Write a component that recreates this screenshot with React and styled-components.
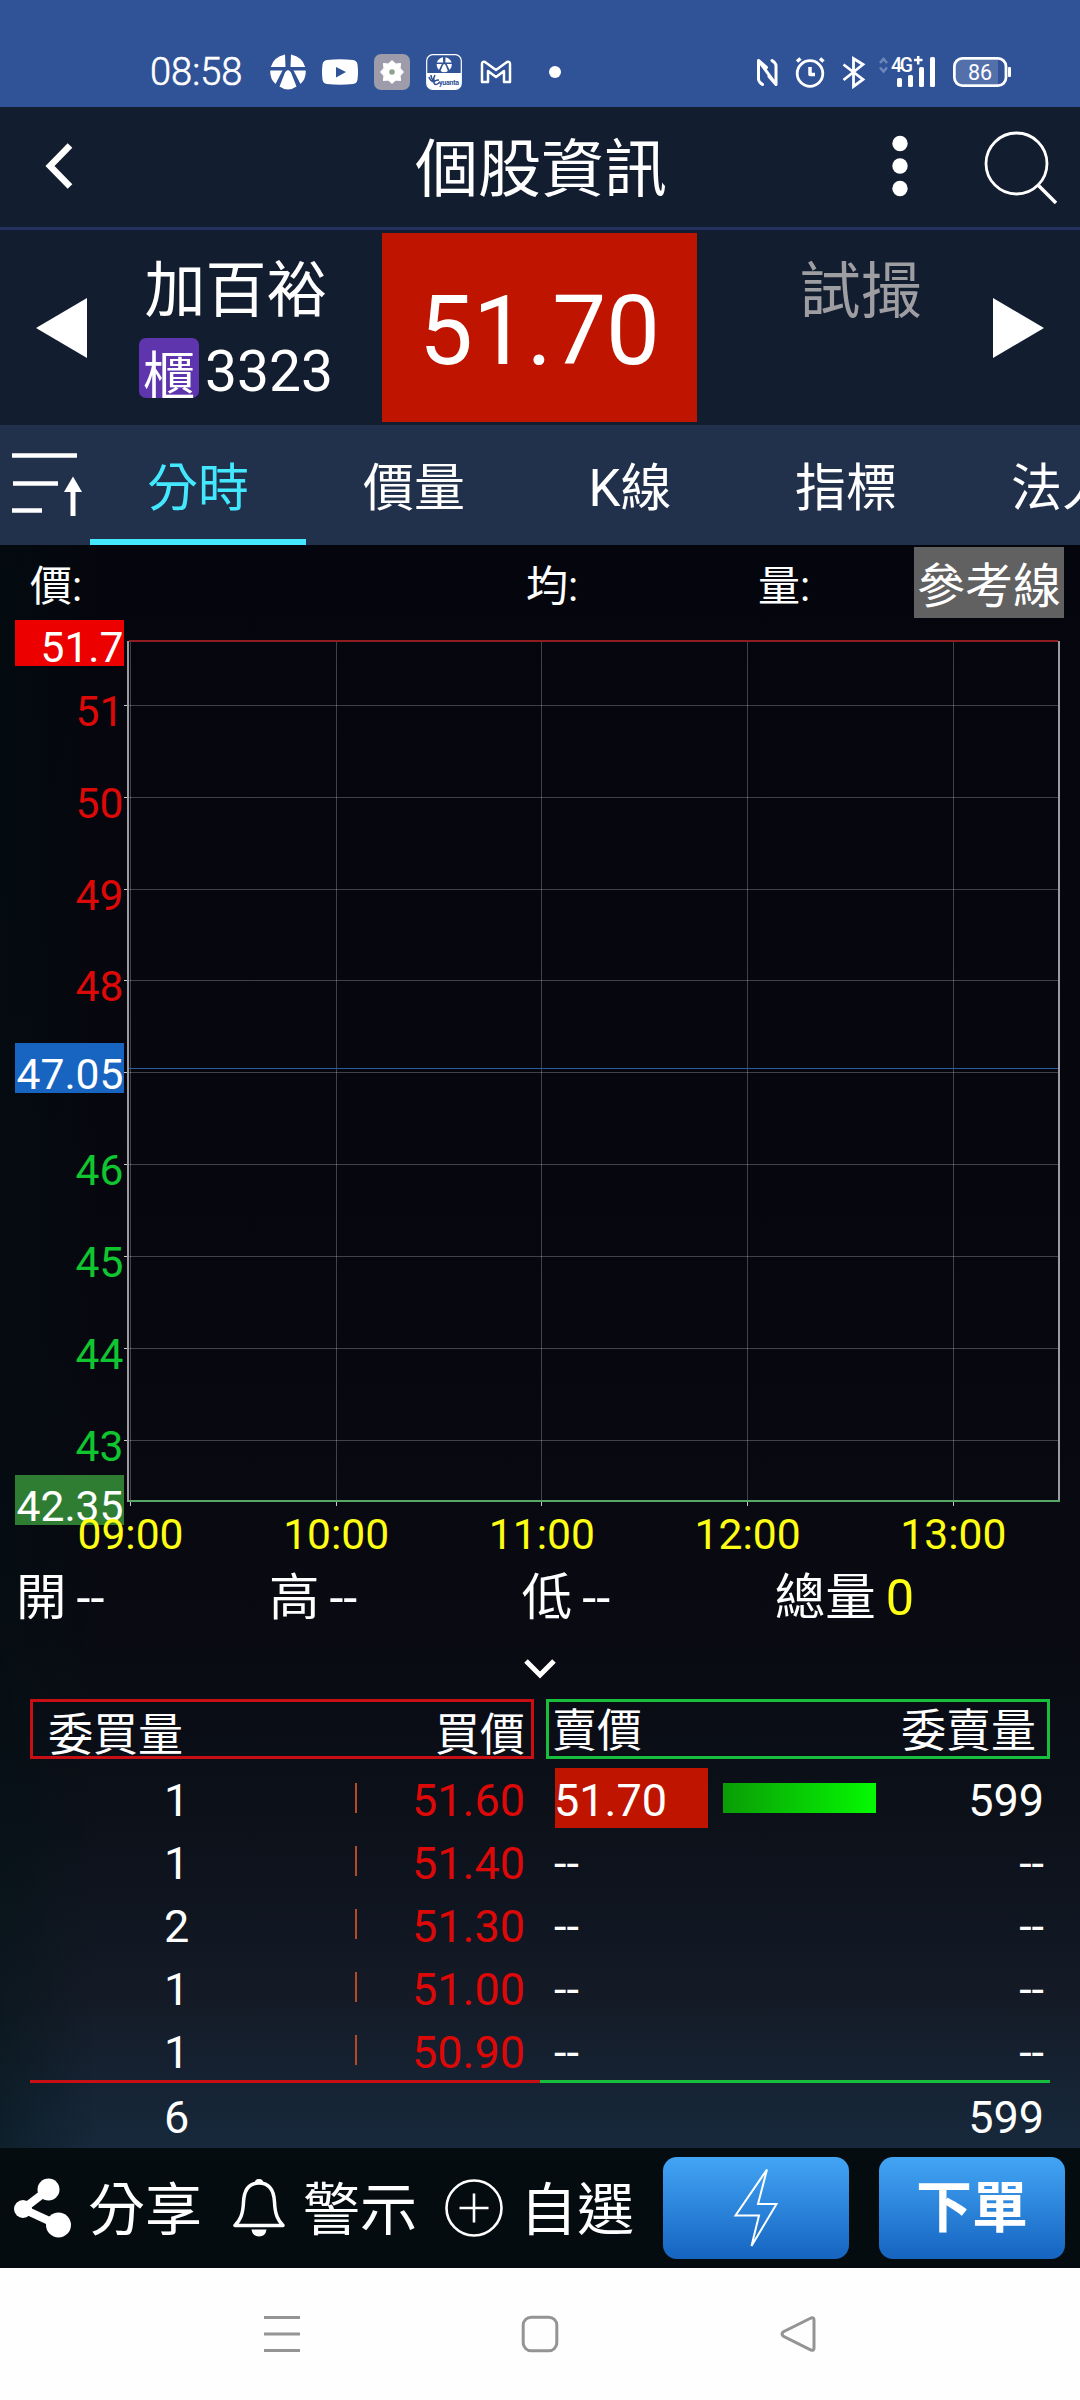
import styled, { createGlobalStyle } from 'styled-components';

const TABS = ['分時', '價量', 'K線', '指標', '法人'];

const SUMMARY = [
	{ label: '開', value: '--' },
	{ label: '高', value: '--' },
	{ label: '低', value: '--' },
	{ label: '總量', value: '0', highlight: true },
];

const BIDS = [
	{ volume: '1', price: '51.60' },
	{ volume: '1', price: '51.40' },
	{ volume: '2', price: '51.30' },
	{ volume: '1', price: '51.00' },
	{ volume: '1', price: '50.90' },
];

const ASKS = [
	{ price: '51.70', volume: '599', limit: true },
	{ price: '--', volume: '--' },
	{ price: '--', volume: '--' },
	{ price: '--', volume: '--' },
	{ price: '--', volume: '--' },
];

const StatusBar = () => (
	<StyledStatus>
		<time>08:58</time>
		<svg className='fan' width='36' height='36' viewBox='0 0 36 36'>
			<FanShape />
		</svg>
		<svg className='youtube' width='36' height='26' viewBox='0 0 36 26'>
			<path
				fill='#fff'
				d='M5 1Q18-.6 31 1q4 .5 4.500 4.500Q36.500 13 35.500 20.500 35 24.500 31 25 18 26.600 5 25 1 24.500.5 20.500-.5 13 .5 5.500 1 1.500 5 1z'
			/>
			<path fill='#305296' d='M14 8l10 5-10 5.500z' />
		</svg>
		<svg className='photo' width='36' height='36' viewBox='0 0 36 36'>
			<rect width='36' height='36' rx='7' fill='#9e9bab' />
			<path
				fill='#fff'
				stroke='#fff'
				strokeWidth='1.500'
				strokeLinejoin='round'
				d='M18 7l3.500 3.200 4.800-.5-.5 4.800L29 18l-3.200 3.500.5 4.800-4.800-.5L18 29l-3.500-3.200-4.800.5.5-4.800L7 18l3.200-3.500-.5-4.800 4.800.5z'
			/>
			<circle cx='18' cy='18' r='2.800' fill='#8ea392' />
		</svg>
		<svg className='yuanta' width='36' height='36' viewBox='0 0 36 36'>
			<rect x='.7' y='.7' width='34.600' height='34.600' rx='6' fill='none' stroke='#fff' strokeWidth='1.200' />
			<path fill='#fff' d='M1 19h34v10q0 6-6 6H7q-6 0-6-6z' />
			<g transform='translate(10.500 3) scale(.43)'>
				<FanShape />
			</g>
			<path
				fill='none'
				stroke='#305296'
				strokeWidth='1.500'
				d='M3 23q1 4 5 5M5 21q0 4 3 6M9 21q-2 3-1 6M13 26q-5 0-5 3 1 3 5 0v-1'
			/>
			<text x='13' y='31' fontSize='7' fontWeight='700' fill='#305296' textLength='20'>
				yuanta
			</text>
		</svg>
		<svg className='gmail' width='32' height='24' viewBox='0 0 32 24'>
			<path
				fill='none'
				stroke='#fff'
				strokeWidth='2.500'
				strokeLinejoin='round'
				d='M2 22V4q0-3 3-2l11 8 11-8q3-1 3 2v18h-6V11l-8 6-8-6v11z'
			/>
		</svg>
		<i className='dot' />
		<svg className='signals' width='260' height='34' viewBox='755 55 260 34'>
			<g fill='none' stroke='#fff' strokeWidth='2.800' strokeLinecap='round' strokeLinejoin='round'>
				<path
					d='M762.500 84.500l-2.500-2q-1.500-1.500-1.500-3.500V60.500l17.500 24V66q0-2-1.500-3.500l-2.500-2M758.500 60.500l8 7M776 84.500l-7-8'
					strokeWidth='3'
				/>
				<circle cx='810' cy='73.500' r='12.800' />
				<path d='M810 67v7.500h5M797 61.500l3.500-3M823.500 61.500l-3.500-3' strokeWidth='3.500' strokeLinecap='butt' />
				<path d='M843.500 64.500L863 79.500l-9.500 7V58.500l9.500 6-19.500 15.500' strokeLinejoin='miter' strokeLinecap='butt' />
			</g>
			<path
				d='M880 63l3.500-4 3.500 4M880 67.500l3.500 4 3.500-4'
				fill='none'
				stroke='#6d87bb'
				strokeWidth='2.500'
			/>
			<text x='891' y='71.500' fontSize='19.500' fontWeight='500' fill='#fff' textLength='22'>
				4G
			</text>
			<path d='M914 60h8.500M918.200 56v8.500' stroke='#fff' strokeWidth='2.500' />
			<g fill='#fff'>
				<rect x='897' y='78' width='5' height='9' rx='1.500' />
				<rect x='908' y='75' width='5' height='12' rx='1.500' />
				<rect x='919' y='67' width='5' height='20' rx='1.500' />
				<rect x='930' y='57' width='5' height='30' rx='1.500' />
				<rect x='1008' y='67' width='3' height='10' rx='1' />
			</g>
			<path d='M960 60h38v24h-38q-4 0-4-4V64q0-4 4-4z' fill='#5470ab' />
			<rect x='954.400' y='58.400' width='51.600' height='27.200' rx='8' fill='none' stroke='#fff' strokeWidth='2.800' />
			<text x='980' y='79.500' fontSize='21.500' fill='#fff' textAnchor='middle'>
				86
			</text>
		</svg>
	</StyledStatus>
);

const FanShape = () => (
	<g fill='#fff'>
		<path d='M15 .5L15.500 13H.8Q3.500 3 15 .5z' />
		<path d='M21 .5L20.500 13h14.700Q32.500 3 21 .5z' />
		<path d='M.3 16.500h12.200L5.500 30Q-.3 24.500.3 16.500z' />
		<path d='M35.700 16.500H23.500l7 13.500q5.800-5.500 5.200-13.500z' />
		<path d='M18 16q3 1 4 5l4.500 11.500Q18 38.500 9.500 32.500L14 21q1-4 4-5z' />
	</g>
);

const Header = () => (
	<StyledHeader>
		<svg width='30' height='46' viewBox='0 0 30 46'>
			<path d='M26 2.500L6 23l20 20.500' fill='none' stroke='#fff' strokeWidth='6.500' />
		</svg>
		<h1>個股資訊</h1>
		<svg width='16' height='62' viewBox='0 0 16 62'>
			<circle cx='8' cy='8.500' r='7.700' fill='#fff' />
			<circle cx='8' cy='31' r='7.700' fill='#fff' />
			<circle cx='8' cy='53.500' r='7.700' fill='#fff' />
		</svg>
		<svg width='74' height='74' viewBox='0 0 74 74' fill='none' stroke='#fff' strokeWidth='2.800'>
			<circle cx='33.500' cy='33.500' r='30.500' />
			<path d='M55 55l18 18' strokeWidth='3.500' />
		</svg>
	</StyledHeader>
);

const Quote = () => (
	<StyledQuote>
		<div className='prev'>
			<svg width='51' height='60' viewBox='0 0 51 60'>
				<path d='M51 0v60L0 30z' fill='#fff' />
			</svg>
		</div>
		<div className='stock'>
			<strong>加百裕</strong>
			<div className='code'>
				<span className='market'>櫃</span>
				<span>3323</span>
			</div>
		</div>
		<div className='price'>51.70</div>
		<div className='trial'>試撮</div>
		<div className='next'>
			<svg width='51' height='60' viewBox='0 0 51 60'>
				<path d='M0 0v60l51-30z' fill='#fff' />
			</svg>
		</div>
	</StyledQuote>
);

const TabBar = () => (
	<StyledTabs>
		<svg width='90' height='120' viewBox='0 0 90 120'>
			<path d='M12 30.500h65M13 58.500h45M12 85.500h30' stroke='#fff' strokeWidth='4.500' />
			<path d='M73 64v27' stroke='#fff' strokeWidth='5' />
			<path d='M73 51.500l9 15.500H64z' fill='#fff' />
		</svg>
		{TABS.map((tab, i) => (
			<Tab key={tab} $active={i === 0}>
				{tab}
			</Tab>
		))}
	</StyledTabs>
);

// plot area and scales of the intraday chart
const PLOT = { left: 128, right: 1060, top: 21.5, bottom: 881 };
const REFERENCE = 47.05;
const priceY = (price) => 85.5 + (51 - price) * 91.83;
const hourX = (hour) => 130.5 + (hour - 9) * 205.7;

const PRICES = [51, 50, 49, 48, 47, 46, 45, 44, 43];
const HOURS = [9, 10, 11, 12, 13];

const LIMITS = [
	{ text: '51.7', top: 0, height: 46, fill: '#ec0000' },
	{ text: '47.05', top: 423, height: 50, fill: '#1765c1' },
	{ text: '42.35', top: 855, height: 50, fill: '#2f7d32' },
];

const Chart = () => (
	<StyledChart width='1080' height='935' viewBox='0 0 1080 935'>
		{PRICES.map((price) => {
			const y = Math.floor(priceY(price)) + 0.5;
			// the reference badge takes the place of the label next to it
			const covered = Math.abs(price - REFERENCE) < 0.3;
			return (
				<g key={price}>
					<path d={`M${PLOT.left} ${y}H${PLOT.right}`} className='grid' />
					<path d={`M124 ${y}h3`} className='tick' />
					{!covered && (
						<text x='123.500' y={y + 20.5} textAnchor='end' fill={price > REFERENCE ? '#dd0808' : '#0fc630'}>
							{price}
						</text>
					)}
				</g>
			);
		})}
		{HOURS.map((hour) => {
			const x = Math.floor(hourX(hour)) + 0.5;
			return (
				<g key={hour}>
					<path d={`M${x} ${PLOT.top}V${PLOT.bottom}`} className='grid' />
					<path d={`M${x} 882v4`} className='tick' />
				</g>
			);
		})}
		<path d={`M${PLOT.left} 448.500H${PLOT.right}`} stroke='#2c5a9c' />
		<path d='M128 21V882M1059 21V882' stroke='#9b9ba0' strokeWidth='2' />
		<path d='M129 21H1058' stroke='#8f1c20' strokeWidth='2' />
		<path d='M129 881H1060' stroke='#55a866' strokeWidth='2' />
		{LIMITS.map(({ text, top, height, fill }) => (
			<g key={text}>
				<rect x='15' y={top} width='109' height={height} fill={fill} />
				<text x='123.500' y={top + height - 4.5} textAnchor='end' fill='#fff'>
					{text}
				</text>
			</g>
		))}
		{HOURS.map((hour) => (
			<text key={hour} x={hourX(hour)} y='928.500' textAnchor='middle' fill='#ffff14'>
				{String(hour).padStart(2, '0')}:00
			</text>
		))}
	</StyledChart>
);

const OrderBook = () => (
	<StyledBook>
		<Side $color='#c90f13'>
			<header className='bid'>
				<span>委買量</span>
				<span>買價</span>
			</header>
			{BIDS.map(({ volume, price }) => (
				<BidRow key={price}>
					<span className='volume'>{volume}</span>
					<i />
					<span className='price'>{price}</span>
				</BidRow>
			))}
			<footer className='bidTotal'>6</footer>
		</Side>
		<Side $color='#17bf3c'>
			<header className='ask'>
				<span>賣價</span>
				<span>委賣量</span>
			</header>
			{ASKS.map(({ price, volume, limit }, i) => (
				<AskRow key={i} $limit={limit}>
					<span className='price'>{price}</span>
					<i />
					<span className='volume'>{volume}</span>
				</AskRow>
			))}
			<footer className='askTotal'>599</footer>
		</Side>
	</StyledBook>
);

const Actions = () => (
	<StyledActions>
		<svg className='share' width='58' height='60' viewBox='0 0 58 60'>
			<path d='M34.500 11.500L9 31l35 16' fill='none' stroke='#fff' strokeWidth='8' />
			<circle cx='34.500' cy='11.500' r='11' fill='#fff' />
			<circle cx='9' cy='31' r='9' fill='#fff' />
			<circle cx='44.500' cy='47' r='12.500' fill='#fff' />
		</svg>
		<span>分享</span>
		<svg className='bell' width='54' height='60' viewBox='0 0 54 60'>
			<path
				d='M27 5C15 5 12 14 11.500 24 11 37 8 42 3 47.500h48C46 42 43 37 42.500 24 42 14 39 5 27 5z'
				fill='none'
				stroke='#fff'
				strokeWidth='3.500'
				strokeLinejoin='round'
			/>
			<path d='M22.500 6q0-5 4.500-5t4.500 5zM19.500 51.500h15q-1 7-7.500 7t-7.500-7z' fill='#fff' />
		</svg>
		<span>警示</span>
		<svg className='add' width='58' height='60' viewBox='0 0 58 60' fill='none' stroke='#fff' strokeWidth='2.600'>
			<circle cx='29' cy='30' r='27.500' />
			<path d='M14.500 30h29M29 15.500v29' />
		</svg>
		<span>自選</span>
		<Order className='flash'>
			<svg width='46' height='82' viewBox='0 0 46 82'>
				<path
					d='M34 2.500L2.500 48.500H26L18.500 79 43.500 37H25z'
					fill='none'
					stroke='#fff'
					strokeWidth='2'
				/>
			</svg>
		</Order>
		<Order>下單</Order>
	</StyledActions>
);

const NavBar = () => (
	<StyledNav>
		<svg width='36' height='38' viewBox='0 0 36 38'>
			<path d='M0 2.500h36M0 19h36M0 35.500h36' />
		</svg>
		<svg width='38' height='38' viewBox='0 0 38 38'>
			<rect x='2.200' y='2.200' width='33.600' height='33.600' rx='8' />
		</svg>
		<svg width='36' height='38' viewBox='0 0 36 38'>
			<path d='M31 3L3 17q-2 2 0 4l28 14q3 1 3-2V5q0-3-3-2z' />
		</svg>
	</StyledNav>
);

export default function App() {
	return (
		<Screen>
			<GlobalStyle />
			<StatusBar />
			<Header />
			<Quote />
			<TabBar />
			<Board>
				<Info>
					<span>價:</span>
					<span>均:</span>
					<span>量:</span>
					<button>參考線</button>
				</Info>
				<Chart />
				<Summary>
					{SUMMARY.map(({ label, value, highlight }) => (
						<SummaryItem key={label} $highlight={highlight}>
							{label}
							<b>{value}</b>
						</SummaryItem>
					))}
				</Summary>
				<Expand>
					<svg width='32' height='20' viewBox='0 0 32 20'>
						<path d='M2 2l14 14L30 2' fill='none' stroke='#fff' strokeWidth='5' />
					</svg>
				</Expand>
				<OrderBook />
			</Board>
			<Actions />
			<NavBar />
		</Screen>
	);
}

const GlobalStyle = createGlobalStyle`
	* {
		box-sizing: border-box;
	}

	body {
		margin: 0;
		background: #05060d;
		font-family: Roboto, 'Noto Sans CJK TC', sans-serif;
	}

	svg {
		display: block;
		flex: none;
	}

	button {
		padding: 0;
		border: none;
		color: inherit;
		font-family: inherit;
	}
`;

const Screen = styled.div`
	display: flex;
	flex-direction: column;
	width: 1080px;
	height: 2400px;
	overflow: hidden;
	color: #fff;
`;

const StyledStatus = styled.div`
	display: flex;
	align-items: center;
	height: 107px;
	padding: 37px 65px 0 150px;
	background: #305296;

	time {
		width: 120px;
		font-size: 38px;
		font-weight: 300;
		-webkit-text-stroke: 0.6px #fff;
		line-height: 70px;
	}

	.youtube,
	.photo,
	.yuanta {
		margin-left: 16px;
	}

	.gmail {
		margin-left: 18px;
	}

	.dot {
		width: 12px;
		height: 12px;
		margin-left: 37px;
		border-radius: 50%;
		background: #fff;
	}

	.signals {
		margin-left: auto;
	}
`;

const StyledHeader = styled.div`
	display: flex;
	align-items: center;
	height: 123px;
	padding: 0 23px 3px 44px;
	background: #131d30;
	border-bottom: 3px solid #22315d;

	h1 {
		flex: 1;
		margin: 0 0 0 116px;
		padding: 8px 0 0;
		font-size: 63px;
		font-weight: 400;
		line-height: 114px;
		text-align: center;
	}

	svg:last-child {
		margin-left: 75px;
		margin-top: 3px;
	}
`;

const StyledQuote = styled.div`
	display: grid;
	grid-template-columns: 90px 292px 315px 296px 87px;
	height: 195px;
	padding: 3px 0;
	background: #131d30;

	.prev,
	.next {
		display: flex;
		align-items: center;
	}

	.prev {
		justify-content: flex-end;
		padding-right: 3px;
	}

	.stock {
		display: flex;
		flex-direction: column;
		align-items: center;
		padding-top: 23px;
	}

	.stock strong {
		font-size: 61px;
		font-weight: 400;
		line-height: 70px;
	}

	.code {
		display: flex;
		gap: 6px;
		margin-top: 12px;
		font-size: 57px;
		line-height: 67px;
	}

	.market {
		width: 60px;
		height: 60px;
		padding-top: 10px;
		border-radius: 7px;
		background: #5f35ae;
		font-size: 52px;
		line-height: 60px;
		text-align: center;
		overflow: hidden;
	}

	.price {
		padding-top: 8px;
		background: #bf1400;
		font-size: 96px;
		line-height: 180px;
		text-align: center;
	}

	.trial {
		padding: 24px 0 0 31px;
		color: #9e9ea2;
		font-size: 61px;
		line-height: 70px;
		text-align: center;
	}
`;

const StyledTabs = styled.nav`
	display: flex;
	height: 120px;
	background: #21304b;
	overflow: hidden;
`;

const Tab = styled.span`
	flex: none;
	width: 216px;
	padding-top: 7px;
	border-bottom: 6px solid ${({ $active }) => ($active ? '#43e8ff' : 'transparent')};
	color: ${({ $active }) => ($active ? '#43e8ff' : '#fff')};
	font-size: 51px;
	line-height: 114px;
	text-align: center;
	white-space: nowrap;
`;

const Board = styled.main`
	display: flex;
	flex-direction: column;
	height: 1603px;
	background:
		linear-gradient(90deg, #00121466, transparent 9%),
		linear-gradient(#05060d 0, #07080f 50%, #090a12 68%, #0c111a 80%, #141b27 91%, #17293c 100%);
`;

const Info = styled.div`
	display: grid;
	grid-template-columns: 496px 232px 156px 150px;
	height: 75px;
	padding: 2px 0 2px 30px;
	font-size: 42px;
	line-height: 79px;

	button {
		height: 71px;
		padding-top: 7px;
		background: #616161;
		font-size: 48px;
		line-height: 63px;
	}
`;

const StyledChart = styled.svg`
	font-size: 42.600px;

	.grid {
		stroke: #fff;
		stroke-opacity: 0.24;
	}

	.tick {
		stroke: #c8c8c8;
	}
`;

const Summary = styled.div`
	display: grid;
	grid-template-columns: repeat(4, 252.900px);
	height: 85px;
	padding-left: 16px;
	line-height: 86px;
`;

const SummaryItem = styled.span`
	font-size: 50.500px;

	b {
		margin-left: 10px;
		color: ${({ $highlight }) => ($highlight ? '#ffff14' : '#fff')};
		font-weight: 400;
	}
`;

const Expand = styled.div`
	display: flex;
	justify-content: center;
	height: 59px;
	padding-top: 19px;
`;

const StyledBook = styled.div`
	display: grid;
	grid-template-columns: 510px 510px;
	height: 449px;
	padding: 0 30px;
	font-size: 45px;
`;

const Side = styled.section`
	header {
		display: flex;
		justify-content: space-between;
		width: 504px;
		height: 60px;
		margin-bottom: 9px;
		border: 3px solid ${({ $color }) => $color};
	}

	.bid {
		padding: 11px 6px 0 15px;
		line-height: 46px;
	}

	.ask {
		margin-left: 6px;
		padding: 7px 11px 0 3px;
		line-height: 46px;
	}

	footer {
		height: 68px;
		margin-top: -3px;
		padding-top: 5px;
		border-top: 3px solid ${({ $color }) => $color};
		line-height: 60px;
	}

	.bidTotal {
		padding-left: 134px;
	}

	.askTotal {
		padding-right: 6px;
		text-align: right;
	}
`;

const BidRow = styled.div`
	display: flex;
	height: 63px;
	line-height: 65px;

	.volume {
		width: 325px;
		padding-left: 134px;
	}

	i {
		width: 2px;
		height: 30px;
		margin-top: 15px;
		background: #b44a28;
	}

	.price {
		flex: 1;
		padding-right: 15px;
		color: #dd0808;
		text-align: right;
	}
`;

const AskRow = styled.div`
	display: flex;
	height: 63px;
	padding: 0 6px 0 15px;
	line-height: 65px;

	.price {
		width: 153px;
		height: 60px;
		text-indent: -1px;
		background: ${({ $limit }) => ($limit ? '#bf1400' : 'none')};
	}

	i {
		width: 153px;
		height: 30px;
		margin: 15px 0 0 15px;
		background: ${({ $limit }) => ($limit ? 'linear-gradient(90deg, #0a9c06, #05fa02)' : 'none')};
	}

	.volume {
		flex: 1;
		text-align: right;
	}
`;

const StyledActions = styled.div`
	display: flex;
	align-items: center;
	height: 120px;
	padding-left: 14px;
	background: #050c10;
	font-size: 57px;

	span {
		padding-top: 6px;
		line-height: 100px;
	}

	.share {
		margin-right: 16px;
	}

	.bell {
		margin: 0 17px 0 30px;
	}

	.add {
		margin: 0 17px 0 28px;
	}

	.flash {
		margin: 0 30px 0 auto;
	}
`;

const Order = styled.button`
	display: flex;
	justify-content: center;
	align-items: center;
	width: 186px;
	height: 102px;
	margin-right: 15px;
	border-radius: 14px;
	background: linear-gradient(#43a5f5, #1564c0);
	font-size: 56px;
	font-weight: 700;
	line-height: 102px;
`;

const StyledNav = styled.div`
	display: flex;
	justify-content: center;
	align-items: center;
	gap: 221px;
	height: 132px;
	background: #fefefe;

	svg {
		fill: none;
		stroke: #949494;
		stroke-width: 3;
	}
`;
